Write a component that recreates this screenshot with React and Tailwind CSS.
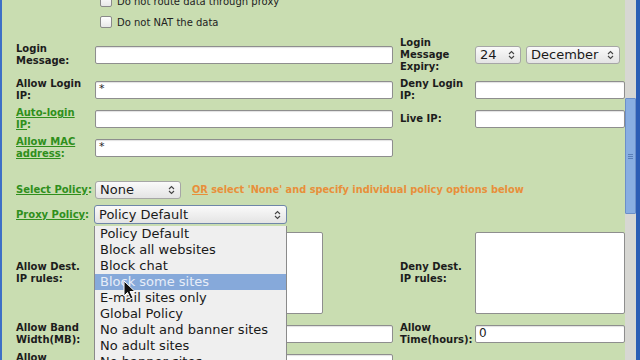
import React from "react";

const Label = ({ children, className = "" }) => (
  <div className={`text-[10px] font-bold leading-[12px] text-[#1c1c1c] ${className}`}>{children}</div>
);

const LinkLabel = ({ text, rest }) => (
  <span className="text-[#2f8f1c]">
    <span className="underline">{text}</span>
    {rest}
  </span>
);

const TextBox = ({ value = "", className = "" }) => (
  <div
    className={`h-[18px] rounded-[2px] border border-[#8e8e8e] bg-white pl-[3px] text-[11px] leading-[14px] text-[#222] shadow-[inset_0_1px_1px_rgba(0,0,0,0.12)] ${className}`}
  >
    {value}
  </div>
);

const UpDown = () => (
  <svg width="7" height="10" viewBox="0 0 7 10" className="shrink-0">
    <path d="M1 4 L3.5 1.5 L6 4" fill="none" stroke="#444" strokeWidth="1.1" />
    <path d="M1 6 L3.5 8.5 L6 6" fill="none" stroke="#444" strokeWidth="1.1" />
  </svg>
);

const Select = ({ value, className = "", focused = false }) => (
  <div
    className={`flex h-[18px] items-center justify-between rounded-[3px] border bg-gradient-to-b from-[#fafafa] to-[#e4e4e4] pl-[4px] pr-[5px] leading-[16px] text-[#1a1a1a] ${
      focused ? "border-[#6f86a8]" : "border-[#a6a6a6]"
    } ${className}`}
  >
    <span>{value}</span>
    <UpDown />
  </div>
);

const Checkbox = ({ text }) => (
  <div className="flex h-[18px] items-center pl-[98px]">
    <div className="h-[12px] w-[12px] rounded-[2px] border border-[#8a8a8a] bg-gradient-to-b from-white to-[#e8e8e8]" />
    <span className="ml-[5px] text-[10px] text-[#222]">{text}</span>
  </div>
);

const policies = [
  "Policy Default",
  "Block all websites",
  "Block chat",
  "Block some sites",
  "E-mail sites only",
  "Global Policy",
  "No adult and banner sites",
  "No adult sites",
  "No banner sites",
];

export default function App() {
  return (
    <div className="flex h-[360px] w-[640px] overflow-hidden bg-[#c9ddb1] font-['DejaVu_Sans',sans-serif]">
      <div className="w-[2px] shrink-0 bg-[#3d6fc6]" />

      <div className="relative w-[623px] shrink-0">
        <div className="-mt-[8px] flex flex-col">
          <div className="flex flex-col gap-[3px]">
            <Checkbox text="Do not route data through proxy" />
            <Checkbox text="Do not NAT the data" />
          </div>

          {/* login message */}
          <div className="mt-[6px] flex h-[36px] items-center pl-[14px]">
            <Label className="w-[79px]">
              Login
              <br />
              Message:
            </Label>
            <TextBox className="w-[298px]" />
            <Label className="ml-[7px] w-[75px]">
              Login
              <br />
              Message
              <br />
              Expiry:
            </Label>
            <Select value="24" className="w-[46px] text-[13px]" />
            <Select value="December" className="ml-[5px] w-[94px] text-[13px]" />
          </div>

          <div className="mt-[5px] flex h-[24px] items-center pl-[14px]">
            <Label className="w-[79px]">
              Allow Login
              <br />
              IP:
            </Label>
            <TextBox value="*" className="w-[298px]" />
            <Label className="ml-[7px] w-[75px]">
              Deny Login
              <br />
              IP:
            </Label>
            <TextBox className="w-[150px]" />
          </div>

          <div className="mt-[5px] flex h-[24px] items-center pl-[14px]">
            <Label className="w-[79px]">
              <LinkLabel text="Auto-login" />
              <br />
              <LinkLabel text="IP" rest=":" />
            </Label>
            <TextBox className="w-[298px]" />
            <Label className="ml-[7px] w-[75px]">Live IP:</Label>
            <TextBox className="w-[150px]" />
          </div>

          <div className="mt-[5px] flex h-[24px] items-center pl-[14px]">
            <Label className="w-[79px]">
              <LinkLabel text="Allow MAC" />
              <br />
              <LinkLabel text="address" rest=":" />
            </Label>
            <TextBox value="*" className="w-[298px]" />
          </div>

          {/* policies */}
          <div className="mt-[19px] flex h-[22px] items-center pl-[14px]">
            <Label className="w-[79px]">
              <LinkLabel text="Select Policy" rest=":" />
            </Label>
            <Select value="None" className="w-[86px] text-[13px]" />
            <span className="ml-[11px] text-[9.8px] font-bold text-[#e88f3a]">
              <span className="underline">OR</span> select 'None' and specify individual policy options below
            </span>
          </div>

          <div className="relative mt-[2px] flex h-[23px] items-center pl-[14px]">
            <Label className="w-[78px]">
              <LinkLabel text="Proxy Policy" rest=":" />
            </Label>
            <Select value="Policy Default" focused className="h-[19px] w-[193px] text-[13px]" />
          </div>

          <div className="mt-[6px] flex h-[82px] items-center pl-[14px]">
            <Label className="w-[79px]">
              Allow Dest.
              <br />
              IP rules:
            </Label>
            <div className="h-full w-[228px] rounded-[2px] border border-[#8e8e8e] bg-white" />
            <Label className="ml-[77px] w-[75px]">
              Deny Dest.
              <br />
              IP rules:
            </Label>
            <div className="h-full w-[150px] rounded-[2px] border border-[#8e8e8e] bg-white" />
          </div>

          <div className="mt-[8px] flex h-[24px] items-center pl-[14px]">
            <Label className="w-[79px]">
              Allow Band
              <br />
              Width(MB):
            </Label>
            <TextBox className="w-[298px]" />
            <Label className="ml-[7px] w-[75px]">
              Allow
              <br />
              Time(hours):
            </Label>
            <TextBox value="0" className="w-[150px] text-[12px]" />
          </div>

          <div className="mt-[5px] flex h-[24px] items-start pl-[14px]">
            <Label className="w-[79px] pt-[1px]">
              Allow
              <br />
              Login
            </Label>
            <TextBox className="mt-[3px] w-[298px]" />
          </div>
        </div>

        {/* open dropdown list */}
        <div className="absolute left-[92px] top-[226px] w-[193px] border-x border-[#8a8a8a] bg-[#efefef] text-[13px] leading-[16px] text-[#1a1a1a]">
          {policies.map((p, i) => (
            <div
              key={p}
              className={`h-[16px] whitespace-nowrap pl-[5px] ${i === 3 ? "bg-[#86a9da] text-[#e6edf8]" : ""}`}
            >
              {p}
            </div>
          ))}
        </div>

        {/* mouse pointer */}
        <svg width="14" height="20" viewBox="0 0 14 20" className="absolute left-[121px] top-[280px]">
          <path
            d="M1 1 L1 16 L4.5 12.5 L7.5 19 L10 18 L7 11.5 L12 11.5 Z"
            fill="#111"
            stroke="#fff"
            strokeWidth="1"
            strokeLinejoin="round"
          />
        </svg>
      </div>

      {/* scrollbar */}
      <div className="flex w-[11px] shrink-0 flex-col bg-[#d7d7d3]">
        <div className="mt-[98px] flex h-[116px] items-center justify-center rounded-[1px] border border-[#6b8fc9] bg-[#88aee2]">
          <div className="flex flex-col gap-[1px] pt-[1px]">
            <div className="h-px w-[5px] bg-[#5a7fb8]" />
            <div className="h-px w-[5px] bg-[#5a7fb8]" />
            <div className="h-px w-[5px] bg-[#5a7fb8]" />
          </div>
        </div>
      </div>
      <div className="w-[4px] shrink-0 bg-[#2b5db5]" />
    </div>
  );
}
